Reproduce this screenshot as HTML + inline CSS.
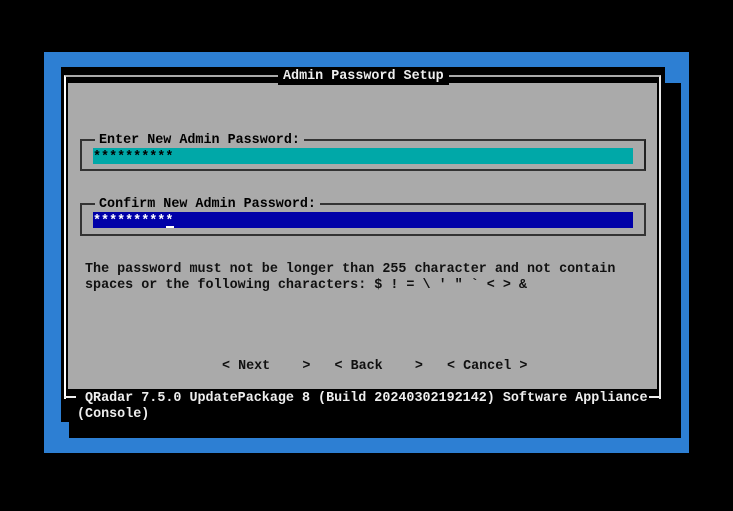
<!DOCTYPE html>
<html><head><meta charset="utf-8"><style>
body{margin:0;width:733px;height:511px;background:#000;position:relative;overflow:hidden;font-family:"Liberation Mono","DejaVu Sans Mono",monospace;font-size:13.4px;font-weight:bold}
div{position:absolute;box-sizing:border-box}
.t{white-space:pre;line-height:16px}
</style></head><body>
<div style="left:44px;top:52px;width:645px;height:401px;background:#2d7fd3"></div>
<div style="left:69px;top:83px;width:612px;height:355px;background:#000"></div>
<div style="left:61px;top:67px;width:604px;height:355px;background:#000"></div>
<div style="left:64px;top:75px;width:597px;height:324px;border:2px solid #e8e8e8;border-bottom:none;border-top-color:#aaa;border-left-color:#fff"></div>
<div style="left:68px;top:83px;width:589px;height:306px;background:#aaa"></div>
<div class="t" style="left:278px;top:67px;color:#eee;background:#000;padding:2px 5px 0">Admin Password Setup</div>
<div style="left:80px;top:139px;width:566px;height:32px;border:2px solid #333;border-right-color:#222"></div>
<div class="t" style="left:95px;top:133px;background:#aaa;color:#000;padding:0 4px">Enter New Admin Password:</div>
<div style="left:93px;top:148px;width:540px;height:16px;background:#00a8a8"></div>
<div class="t" style="left:93px;top:150px;color:#000">**********</div>
<div style="left:80px;top:203px;width:566px;height:33px;border:2px solid #333"></div>
<div class="t" style="left:95px;top:197px;background:#aaa;color:#000;padding:0 4px">Confirm New Admin Password:</div>
<div style="left:93px;top:212px;width:540px;height:16px;background:#0000a8"></div>
<div class="t" style="left:93px;top:214px;color:#fff">**********</div>
<div style="left:166px;top:226px;width:8px;height:2px;background:#fff"></div>
<div class="t" style="left:85px;top:262px;color:#111">The password must not be longer than 255 character and not contain
spaces or the following characters: $ ! = \ ' " ` &lt; &gt; &amp;</div>
<div class="t" style="left:222px;top:359px;color:#111">&lt; Next    &gt;   &lt; Back    &gt;   &lt; Cancel &gt;</div>
<div class="t" style="left:85px;top:391px;color:#eee">QRadar 7.5.0 UpdatePackage 8 (Build 20240302192142) Software Appliance</div>
<div class="t" style="left:77px;top:407px;color:#eee">(Console)</div>
<div style="left:64px;top:396px;width:12px;height:2px;background:#eee"></div>
<div style="left:649px;top:396px;width:12px;height:2px;background:#eee"></div>
</body></html>
